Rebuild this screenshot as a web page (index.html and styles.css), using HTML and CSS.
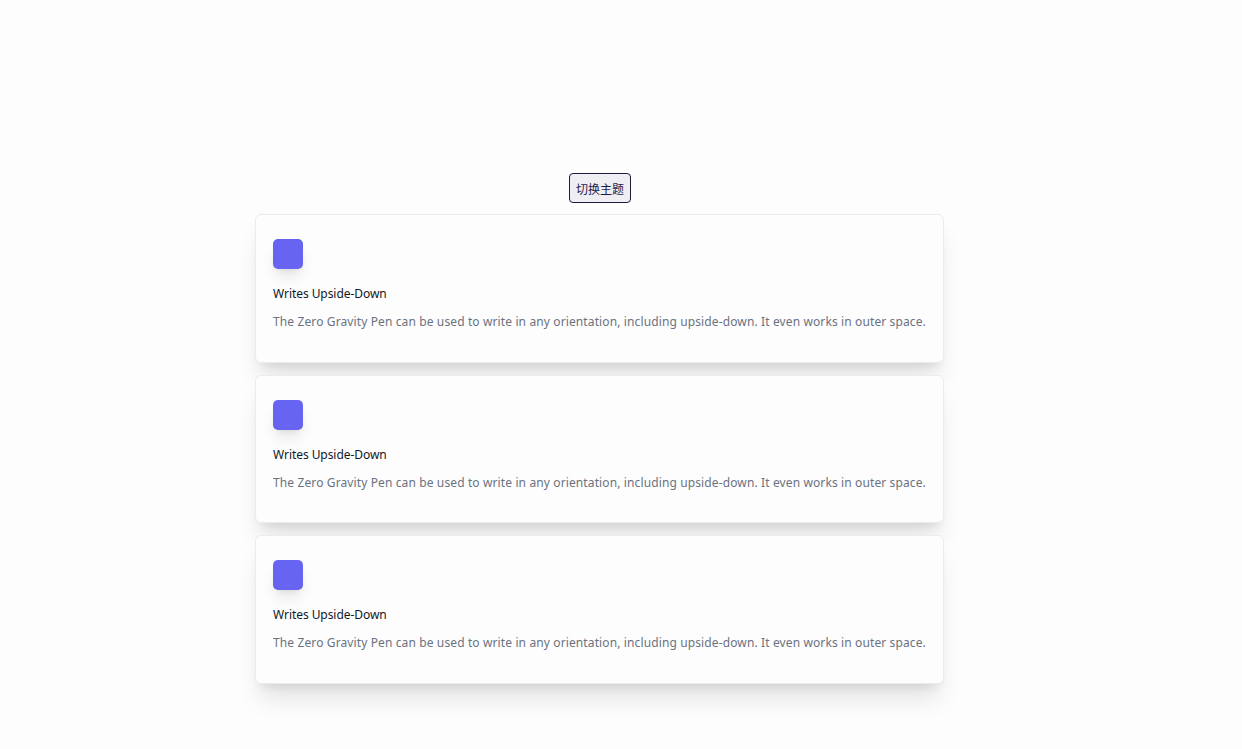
FILE: index.html
```html
<!DOCTYPE html>
<html lang="zh">
<head>
<meta charset="utf-8">
<title>Cards</title>
<link rel="stylesheet" href="styles.css">
</head>
<body>
<div class="page">
  <button class="toggle">切换主题</button>
  <div class="list">
    <div class="card">
      <div class="icon"></div>
      <div class="title">Writes Upside-Down</div>
      <p class="desc">The Zero Gravity Pen can be used to write in any orientation, including upside-down. It even works in outer space.</p>
    </div>
    <div class="card">
      <div class="icon"></div>
      <div class="title">Writes Upside-Down</div>
      <p class="desc">The Zero Gravity Pen can be used to write in any orientation, including upside-down. It even works in outer space.</p>
    </div>
    <div class="card">
      <div class="icon"></div>
      <div class="title">Writes Upside-Down</div>
      <p class="desc">The Zero Gravity Pen can be used to write in any orientation, including upside-down. It even works in outer space.</p>
    </div>
  </div>
</div>
</body>
</html>
```

FILE: styles.css
```css
html, body {
  margin: 0;
  padding: 0;
  background: #fdfdfd;
}
body {
  font-family: "Noto Sans", "Noto Sans CJK SC", sans-serif;
}
.page {
  width: 1200px;
  padding-top: 173px;
  padding-bottom: 60px;
  display: flex;
  flex-direction: column;
  align-items: center;
}
.toggle {
  font-family: "Noto Sans CJK SC", sans-serif;
  font-size: 12px;
  color: #1e1b4b;
  background: #efeff3;
  border: 1px solid #1f1d3a;
  border-radius: 4px;
  height: 30px;
  padding: 0 6px;
  margin: 0 0 11px;
}
.list {
  width: 689px;
  margin-right: 1px;
  display: flex;
  flex-direction: column;
  gap: 12px;
}
.card {
  box-sizing: border-box;
  height: 148.5px;
  background: #fdfdfd;
  border: 1px solid #ececec;
  border-radius: 6px;
  padding: 24px 17px 0;
  box-shadow: 0 20px 25px -5px rgba(0,0,0,0.1), 0 8px 10px -6px rgba(0,0,0,0.1);
}
.icon {
  width: 30px;
  height: 30px;
  border-radius: 5px;
  background: #6764f1;
  box-shadow: 0 10px 15px -3px rgba(0,0,0,0.1), 0 4px 6px -4px rgba(0,0,0,0.1);
}
.title {
  margin-top: 17px;
  font-size: 12px;
  line-height: 16px;
  letter-spacing: -0.06px;
  color: #111827;
}
.desc {
  margin: 12px 0 0;
  font-size: 12px;
  line-height: 16px;
  letter-spacing: 0.12px;
  color: #6b7280;
}
```
